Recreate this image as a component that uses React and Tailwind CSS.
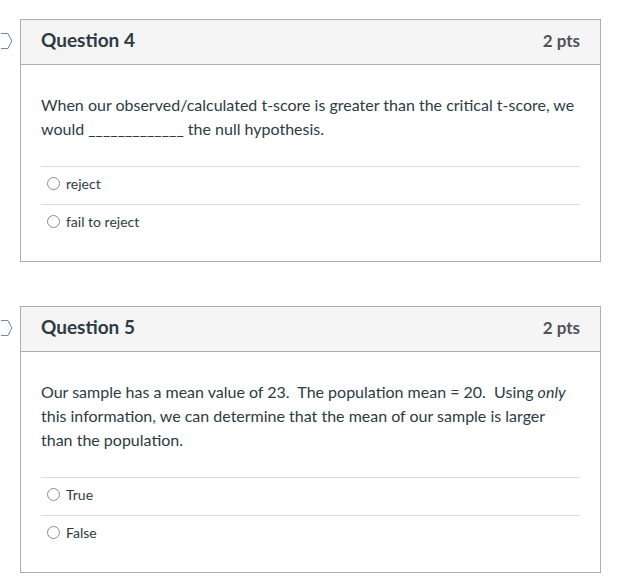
import React from "react";

const questions = [
  {
    title: "Question 4",
    points: "2 pts",
    text: (
      <>
        When our observed/calculated t-score is greater than the critical
        t-score, we would _____________ the null hypothesis.
      </>
    ),
    answers: ["reject", "fail to reject"],
  },
  {
    title: "Question 5",
    points: "2 pts",
    text: (
      <>
        Our sample has a mean value of 23.{"\u00a0"} The population mean = 20.
        {"\u00a0"} Using <em>only</em> this information, we can determine that
        the mean of our sample is larger than the population.
      </>
    ),
    answers: ["True", "False"],
  },
];

function FlagMarker() {
  return (
    <svg
      className="absolute left-[-20px] top-[13px]"
      width="12"
      height="16"
      viewBox="0 0 12 16"
      fill="none"
    >
      <path
        d="M-4 0.5 H7 L10.8 8 L7 15.5 H-4"
        stroke="#6f88a1"
        strokeWidth="1"
      />
    </svg>
  );
}

function QuestionCard({ question }) {
  return (
    <div className="relative ml-[20px] w-[581px] border border-[#adadad] bg-white">
      <FlagMarker />
      <div className="flex h-[45px] items-center justify-between border-b border-[#adadad] bg-[#f5f5f5] px-[20px] pb-[3px]">
        <h2 className="text-[19px] font-bold text-[#2d3b45]">
          {question.title}
        </h2>
        <span className="text-[17px] font-bold text-[#4f5357]">
          {question.points}
        </span>
      </div>
      <div className="px-[20px] pt-[28px] pb-[19px]">
        <p className="text-[16px] leading-6 text-[#2d3b45]">{question.text}</p>
        <div className="mt-[25px]">
          {question.answers.map((answer) => (
            <label
              key={answer}
              className="flex h-[38px] items-center border-t border-[#dcdcdc] pb-[4px]"
            >
              <span className="ml-[6px] mr-[6px] h-[13px] w-[13px] rounded-full border border-[#8c8c8c] bg-white" />
              <span className="text-[14px] text-[#2d3b45]">{answer}</span>
            </label>
          ))}
        </div>
      </div>
    </div>
  );
}

export default function App() {
  return (
    <div
      className="min-h-[586px] bg-white pt-[19px]"
      style={{ fontFamily: "Lato, 'Helvetica Neue', Arial, sans-serif" }}
    >
      <div className="flex flex-col gap-[44px]">
        {questions.map((q) => (
          <QuestionCard key={q.title} question={q} />
        ))}
      </div>
    </div>
  );
}
